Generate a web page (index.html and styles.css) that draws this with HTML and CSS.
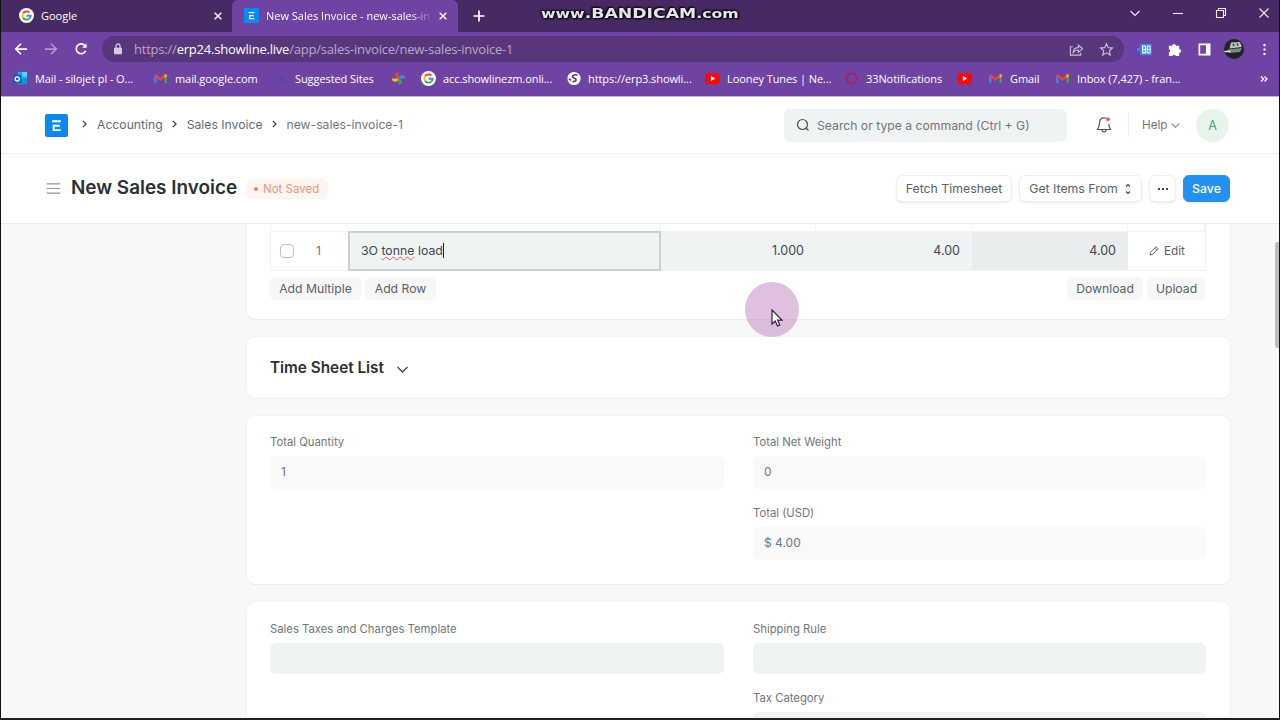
FILE: index.html
```
<!DOCTYPE html>
<html lang="en">
<head>
  <meta charset="UTF-8">
  <meta name="viewport" content="width=device-width, initial-scale=1.0">
  <title>New Sales Invoice - new-sales-invoice-1</title>
  <link rel="stylesheet" href="styles.css">
</head>
<body>
  <!-- shared icons -->
  <svg class="sprite">
    <symbol id="i-google" viewBox="0 0 16 16">
      <circle cx="8" cy="8" r="8" fill="#fff"/>
      <g fill="none" stroke-width="2">
        <path d="M4.300 5.700A4.400 4.400 0 0 1 11 4.800" stroke="#ea4335"/>
        <path d="M4.300 10.300a4.600 4.600 0 0 1 0-4.600" stroke="#fbbc05"/>
        <path d="M11.200 11a4.400 4.400 0 0 1-6.900-.7" stroke="#34a853"/>
        <path d="M8 8.200h4.400c0 1.300-.4 2.200-1.200 2.800" stroke="#4285f4"/>
      </g>
    </symbol>
    <symbol id="i-erp" viewBox="0 0 24 24">
      <rect width="24" height="24" rx="2" fill="#0b89f0"/>
      <path d="M7.500 7.500h9M8.500 12.200h7M8.500 16.800h8" stroke="#fff" stroke-width="2" fill="none"/>
      <path d="M9 11.200v6.500" stroke="#fff" stroke-width="2"/>
    </symbol>
    <symbol id="i-gmail" viewBox="0 0 16 16">
      <path d="M2.500 13V5" stroke="#4285f4" stroke-width="2.400"/>
      <path d="M13.500 13V5" stroke="#34a853" stroke-width="2.400"/>
      <path d="M2.200 4.200 8 9l5.800-4.800" stroke="#e8453c" stroke-width="2.600" fill="none"/>
      <path d="M12.300 3.500h2.400v2.700l-2.400 1.600z" fill="#fbbc04"/>
    </symbol>
    <symbol id="i-youtube" viewBox="0 0 16 16">
      <rect y="2" width="16" height="12" rx="3" fill="#f20d0d"/>
      <path d="M6.300 5.400 10.800 8l-4.500 2.600z" fill="#fff"/>
    </symbol>
    <symbol id="i-down" viewBox="0 0 12 12">
      <path d="m2 4 4 4 4-4" fill="none" stroke="currentColor" stroke-width="1.100"/>
    </symbol>
    <symbol id="i-right" viewBox="0 0 8 8">
      <path d="m2.300 1.500 2.500 2.500-2.500 2.500" fill="none" stroke="#41484f" stroke-width="1.100"/>
    </symbol>
  </svg>

  <div class="browser">
    <div class="tabs">
      <div class="tab">
        <svg class="favicon"><use href="#i-google"/></svg>
        <span class="tab-title">Google</span>
        <svg class="tab-close" viewBox="0 0 8 8"><path d="m.7.7 6.600 6.600M7.300.7.7 7.300"/></svg>
      </div>
      <div class="tab active">
        <svg class="favicon"><use href="#i-erp"/></svg>
        <span class="tab-title">New Sales Invoice - new-sales-in</span>
        <svg class="tab-close" viewBox="0 0 8 8"><path d="m.7.7 6.600 6.600M7.300.7.7 7.300"/></svg>
      </div>
      <svg class="tab-add" viewBox="0 0 12 12"><path d="M6 .5v11M.5 6h11"/></svg>
      <div class="window-buttons">
        <svg viewBox="0 0 12 12"><path d="m1.500 4 4.500 4.500L10.500 4"/></svg>
        <svg viewBox="0 0 12 12"><path d="M1 6.500h10"/></svg>
        <svg viewBox="0 0 12 12"><path d="M1.500 3.500h7v7h-7zM3.500 3.500v-2h7v7h-2"/></svg>
        <svg viewBox="0 0 12 12"><path d="m1.500 1.500 9 9M10.500 1.500l-9 9"/></svg>
      </div>
      <div class="watermark"><span class="wm-www">www</span>.BANDICAM<span class="wm-com">.com</span></div>
    </div>

    <div class="toolbar">
      <div class="nav-buttons">
        <svg viewBox="0 0 16 16"><path d="M15 8H2.500M8 2 2 8l6 6"/></svg>
        <svg class="off" viewBox="0 0 16 16"><path d="M1 8h12.500M8 2l6 6-6 6"/></svg>
        <svg viewBox="0 0 16 16"><path d="M13.300 10a5.600 5.600 0 1 1-1.200-6.200L14 5.700"/><path d="M14.300 1.500v5h-5z" fill="#fff" stroke="none"/></svg>
      </div>
      <div class="address">
        <svg class="lock" viewBox="0 0 10 12"><rect x="1" y="4.800" width="8" height="6.400" rx=".8" fill="#d5cbe0"/><path d="M3 5V3a2 2 0 0 1 4 0v2" fill="none" stroke="#d5cbe0" stroke-width="1.300"/></svg>
        <span class="url">https://<b>erp24.showline.live</b>/app/sales-invoice/new-sales-invoice-1</span>
        <svg class="share" viewBox="0 0 16 16"><path d="M4 5H1.500v9h11v-2.500M4.500 11c.3-3.500 2.500-5 5.500-5V3.300L14.500 7.300 10 11V8.500c-2.500 0-4.200.7-5.500 2.500z"/></svg>
        <svg class="star" viewBox="0 0 16 16"><path d="m8 1.800 1.900 4.200 4.500.4-3.400 3 1 4.500L8 11.500l-4 2.400 1-4.500-3.400-3 4.500-.4z"/></svg>
      </div>
      <div class="extensions">
        <svg viewBox="0 0 16 16"><rect x="3.500" y="2" width="12" height="12" fill="#3a8af5"/><path d="M0 8h3" stroke="#3a8af5" stroke-width="3"/><path d="M6 4.500h3M6 8h3M6 11.500h3M6 4v8M9 4v8M11 4.500h3M11 8h3M11 11.500h3M11 4v8M14 4v8" stroke="#eaf3ff" stroke-width="1.300" fill="none"/></svg>
        <svg viewBox="0 0 16 16"><path d="M2 4h3.500a2 2 0 1 1 4 0H13v3.500a2 2 0 1 1 0 4V15H9.300a1.900 1.900 0 0 0-3.600 0H2v-3.700a1.900 1.900 0 0 0 0-3.600z" fill="#fff"/></svg>
        <svg viewBox="0 0 16 16"><path d="M2.500 2.500h11v11h-11z" fill="none" stroke="#fff" stroke-width="1.800"/><path d="M9.500 2h4v12h-4z" fill="#fff"/></svg>
        <svg class="profile" viewBox="0 0 20 20"><circle cx="10" cy="10" r="10" fill="#1f2325"/><path d="m7 3.500 9-.5 2 5-12.500 1.500z" fill="#b5c2bd"/><path d="m3 10.500 15-1.500-2 4-11 1z" fill="#7c8984"/><path d="m9 5 1 2M13 4.500l1 2" stroke="#343a3a" stroke-width="1.500"/><path d="M.5 12.500h6" stroke="#e3e8e6" stroke-width="1.500"/></svg>
        <svg viewBox="0 0 16 16"><path d="M8 2.200v2.200M8 6.900v2.200M8 11.600v2.200" stroke="#fff" stroke-width="2.200"/></svg>
      </div>
    </div>

    <div class="bookmarks">
      <div class="bookmark">
        <svg viewBox="0 0 16 16"><path d="M5 1h10v13H5z" fill="#28a8ea"/><path d="M10 1h5v5h-5z" fill="#50d9ff"/><path d="m5 9 10-1v6H5z" fill="#1490df"/><rect y="4" width="9" height="9" rx="1" fill="#0a64ad"/><circle cx="4.500" cy="8.500" r="2.200" fill="none" stroke="#fff" stroke-width="1.400"/></svg>
        <span>Mail - silojet pl - O...</span>
      </div>
      <div class="bookmark"><svg><use href="#i-gmail"/></svg><span>mail.google.com</span></div>
      <div class="bookmark"><svg class="narrow" viewBox="0 0 16 16"><path d="M8 3.500 13 12H3z" fill="#4c48b4"/></svg><span>Suggested Sites</span></div>
      <div class="bookmark"><svg viewBox="0 0 16 16"><path d="M8 8V1a3.500 3.500 0 0 0 0 7z" fill="#ea4335"/><path d="M8 8h7a3.500 3.500 0 0 0-7 0z" fill="#4285f4"/><path d="M8 8v7a3.500 3.500 0 0 0 0-7z" fill="#34a853"/><path d="M8 8H1a3.500 3.500 0 0 0 7 0z" fill="#fbbc04"/></svg></div>
      <div class="bookmark"><svg><use href="#i-google"/></svg><span>acc.showlinezm.onli...</span></div>
      <div class="bookmark"><svg class="globe" viewBox="0 0 16 16"><circle cx="8" cy="8" r="7.500" fill="#fff"/><path d="M12 4.200C9.500 2.900 6 4.200 6.200 6c.4 1.800 4.500 1.500 4.200 3.500-.2 1.500-2.200 2.300-4 2M2 8.500l3 1.700" fill="none" stroke="#51347a" stroke-width="1.800"/></svg><span>https://erp3.showli...</span></div>
      <div class="bookmark"><svg><use href="#i-youtube"/></svg><span>Looney Tunes | Ne...</span></div>
      <div class="bookmark"><svg viewBox="0 0 16 16"><circle cx="8" cy="8" r="5.500" fill="none" stroke="#98286f" stroke-width="2.500"/></svg><span>33Notifications</span></div>
      <div class="bookmark"><svg><use href="#i-youtube"/></svg></div>
      <div class="bookmark"><svg><use href="#i-gmail"/></svg><span>Gmail</span></div>
      <div class="bookmark"><svg><use href="#i-gmail"/></svg><span>Inbox (7,427) - fran...</span></div>
      <svg class="more-bookmarks" viewBox="0 0 8 8"><path d="m1 1.500 2.500 2.500L1 6.500M4.500 1.500 7 4 4.500 6.500"/></svg>
    </div>
  </div>

  <div class="navbar">
    <svg class="app-logo"><use href="#i-erp"/></svg>
    <div class="breadcrumbs">
      <svg><use href="#i-right"/></svg><span>Accounting</span>
      <svg><use href="#i-right"/></svg><span>Sales Invoice</span>
      <svg><use href="#i-right"/></svg><span class="current">new-sales-invoice-1</span>
    </div>
    <div class="search">
      <svg viewBox="0 0 14 14"><circle cx="6.500" cy="6.500" r="5" fill="none" stroke="#4a5157" stroke-width="1.200"/><path d="m10 10 2.500 2.500" stroke="#4a5157" stroke-width="1.200"/></svg>
      <span>Search or type a command (Ctrl + G)</span>
    </div>
    <svg class="bell" viewBox="0 0 16 18"><path d="M10 2.300C6 .8 3.600 3.300 3.600 6.200c0 4-1 5.400-2.100 7.300h13c-1-1.600-1.600-3-1.700-5.500M5.800 13.800c.3 1.600 1.200 2.200 2.200 2.200s2-.6 2.200-2.200" fill="none" stroke="#4a5157" stroke-width="1.200"/><circle cx="12" cy="3.200" r="2" fill="#e6695f"/></svg>
    <div class="help">Help <svg><use href="#i-down"/></svg></div>
    <div class="avatar">A</div>
  </div>

  <div class="page-head">
    <svg class="menu" viewBox="0 0 16 12"><path d="M.5 1h15M.5 6h15M.5 11h15"/></svg>
    <h1>New Sales Invoice</h1>
    <span class="indicator">Not Saved</span>
    <div class="actions">
      <button class="btn fetch">Fetch Timesheet</button>
      <button class="btn get-items">Get Items From
        <svg viewBox="0 0 8 14"><path d="M2 4.500 4 2.500l2 2M2 9.500l2 2 2-2"/></svg>
      </button>
      <button class="btn dots"><i></i><i></i><i></i></button>
      <button class="btn save">Save</button>
    </div>
  </div>

  <div class="page-body">
    <div class="card items-card">
      <div class="grid-head"><i></i><i></i><i></i><i></i><i></i><i></i></div>
      <div class="grid-row">
        <div class="cell row-index"><span class="checkbox"></span><span>1</span></div>
        <div class="cell item">3O&nbsp;<span class="misspelled">tonne</span>&nbsp;load<span class="caret"></span></div>
        <div class="cell number">1.000</div>
        <div class="cell number">4.00</div>
        <div class="cell number amount">4.00</div>
        <div class="cell edit">
          <svg viewBox="0 0 10 10"><path d="M1 9l.6-2.800L6.800 1c.5-.5 2.700 1.500 2.100 2.200L3.700 8.400zM5.800 2.200l2 2"/></svg>
          Edit
        </div>
      </div>
      <div class="grid-footer">
        <button class="small-btn add-multiple">Add Multiple</button>
        <button class="small-btn add-row">Add Row</button>
        <button class="small-btn download">Download</button>
        <button class="small-btn upload">Upload</button>
      </div>
    </div>

    <div class="card section-card">
      <h2>Time Sheet List</h2>
      <svg><use href="#i-down"/></svg>
    </div>

    <div class="card totals-card">
      <div class="column">
        <label>Total Quantity</label>
        <div class="control read-only">1</div>
      </div>
      <div class="column">
        <label>Total Net Weight</label>
        <div class="control read-only">0</div>
        <label>Total (USD)</label>
        <div class="control read-only">$ 4.00</div>
      </div>
    </div>

    <div class="card taxes-card">
      <div class="column">
        <label>Sales Taxes and Charges Template</label>
        <div class="control"></div>
      </div>
      <div class="column">
        <label>Shipping Rule</label>
        <div class="control"></div>
        <label>Tax Category</label>
        <div class="control"></div>
      </div>
    </div>
    <div class="scrollbar"></div>
  </div>

  <div class="click-halo"></div>
  <svg class="cursor" viewBox="0 0 12 18"><path d="M1 1v14l3.200-3 2.300 5 2.300-1-2.200-4.800H11z" fill="#fff" stroke="#32203c" stroke-width="1.200"/></svg>
</body>
</html>
```
FILE: styles.css
```
:root {
  --frame: #472a64;
  --toolbar: #6f43a3;
  --pill: #57367c;
  --text: #40474c;
  --muted: #70767a;
  --control: #f0f3f4;
}
* {
  box-sizing: border-box;
}
body {
  margin: 0;
  width: 1280px;
  height: 720px;
  overflow: hidden;
  position: relative;
  display: flex;
  flex-direction: column;
  border-left: 1px solid #111;
  border-right: 1px solid #111;
  border-bottom: 2px solid #231f20;
  background: #fff;
  color: var(--text);
  font-family: Inter, "Liberation Sans", sans-serif;
  font-size: 12.5px;
}
.sprite {
  display: none;
}
svg {
  flex: none;
}

/* browser window */
.browser {
  flex: none;
  height: 97px;
  background: var(--toolbar);
  border-bottom: 1px solid #c9b3dd;
  color: #fff;
  font-family: "Open Sans", "Noto Sans", sans-serif;
  font-size: 11px;
}
.tabs {
  position: relative;
  display: flex;
  align-items: center;
  height: 32px;
  background: var(--frame);
}
.tab {
  display: flex;
  align-items: center;
  width: 231px;
  height: 32px;
  padding: 0 10px 1px 18px;
}
.tab.active {
  width: 226px;
  padding: 0 11px 1px 12px;
  background: var(--toolbar);
  border-radius: 6px 6px 0 0;
}
.favicon {
  width: 15px;
  height: 15px;
  margin-right: 7px;
}
.tab-title {
  flex: 1;
  overflow: hidden;
  white-space: nowrap;
}
.active .tab-title {
  margin-right: 6px;
  -webkit-mask-image: linear-gradient(90deg, #000 86%, transparent);
  mask-image: linear-gradient(90deg, #000 86%, transparent);
}
.tab-close {
  width: 8px;
  height: 8px;
  stroke: #fff;
  stroke-width: 1.5;
}
.tab-add {
  width: 12px;
  height: 12px;
  margin-left: 15px;
  stroke: #fff;
  stroke-width: 1.7;
}
.window-buttons {
  display: flex;
  gap: 31px;
  margin: -6px 9px 0 auto;
}
.window-buttons svg {
  width: 12px;
  height: 12px;
  fill: none;
  stroke: #eee;
  stroke-width: 1.1;
}
.watermark {
  position: absolute;
  left: 540px;
  top: 3px;
  color: #e6e3ea;
  font: bold 13.5px/20px "DejaVu Sans", sans-serif;
  white-space: nowrap;
  text-shadow: 0 0 2px #000, 1px 1px 2px #000, -1px -1px 2px #000;
  transform: scaleX(1.28);
  transform-origin: left;
}
.wm-www,
.wm-com {
  font-size: 12.3px;
}
.toolbar {
  display: flex;
  align-items: center;
  height: 30px;
  padding-top: 4px;
}
.nav-buttons {
  display: flex;
  gap: 16px;
  width: 101px;
  padding-left: 13px;
}
.nav-buttons svg {
  width: 14px;
  height: 14px;
  fill: none;
  stroke: #fff;
  stroke-width: 2;
}
.nav-buttons .off {
  opacity: .45;
}
.address {
  display: flex;
  align-items: center;
  width: 1022px;
  height: 26px;
  padding: 0 10px 0 11px;
  border-radius: 13px;
  background: var(--pill);
}
.lock {
  width: 10px;
  height: 12px;
  margin-right: 11px;
}
.url {
  flex: 1;
  margin-top: -1px;
  color: #b9a8cd;
  font-size: 13px;
  letter-spacing: -0.21px;
}
.url b {
  color: #fff;
  font-weight: 400;
}
.share,
.star {
  width: 15px;
  height: 15px;
  margin-left: 15px;
  fill: none;
  stroke: #cbbdd9;
  stroke-width: 1.2;
}
.extensions {
  display: flex;
  align-items: center;
  gap: 15px;
  padding-left: 13px;
}
.extensions svg {
  width: 15px;
  height: 15px;
}
.extensions .profile {
  width: 20px;
  height: 20px;
  margin: 0 -2px 0 -3px;
}
.bookmarks {
  display: grid;
  grid-template-columns: 140px 122px 116px 30px 146px 138px 139px 113px 31px 67px 205px 10px;
  align-items: center;
  height: 33px;
  padding-left: 12px;
}
.bookmark {
  display: flex;
  align-items: center;
  gap: 7px;
  white-space: nowrap;
  letter-spacing: -0.08px;
}
.bookmark svg {
  width: 15px;
  height: 15px;
}
.bookmark .narrow {
  width: 13px;
}
.bookmark .globe {
  width: 14px;
}
.more-bookmarks {
  width: 8px;
  height: 8px;
  fill: none;
  stroke: #fff;
  stroke-width: 1.3;
}

/* app navbar */
.navbar {
  flex: none;
  display: flex;
  align-items: center;
  height: 57px;
  padding-left: 44px;
  border-bottom: 1px solid #ededee;
  color: var(--muted);
}
.app-logo {
  width: 23px;
  height: 23px;
}
.breadcrumbs {
  display: flex;
  align-items: center;
  width: 716px;
  margin-top: -2px;
  padding-left: 12px;
  color: #636b71;
  font-size: 12.2px;
}
.breadcrumbs svg {
  width: 10px;
  height: 10px;
  margin-right: 7px;
}
.breadcrumbs span {
  margin-right: 7px;
}
.breadcrumbs .current {
  color: var(--muted);
}
.search {
  display: flex;
  align-items: center;
  gap: 7px;
  width: 283px;
  height: 33px;
  padding-left: 12px;
  border-radius: 6px;
  background: var(--control);
  font-size: 12.2px;
}
.search svg {
  width: 14px;
  height: 14px;
}
.bell {
  width: 16px;
  height: 18px;
  margin: 0 16px 0 29px;
}
.help {
  display: flex;
  align-items: center;
  gap: 2px;
  width: 68px;
  height: 24px;
  padding-left: 13px;
  border-left: 1px solid #ececee;
  font-size: 11.7px;
}
.help svg {
  width: 11px;
  height: 11px;
}
.avatar {
  width: 33px;
  height: 33px;
  border-radius: 50%;
  background: #e8f3eb;
  color: #46a36f;
  line-height: 33px;
  text-align: center;
}

/* page head */
.page-head {
  flex: none;
  display: flex;
  align-items: center;
  height: 70px;
  padding: 0 49px 0 45px;
  border-bottom: 1px solid #e9eaeb;
}
.menu {
  width: 15px;
  height: 11px;
  stroke: #90979d;
  stroke-width: 1.3;
}
h1 {
  margin: -3px 9px 0 10px;
  color: #2a3035;
  font-size: 18.9px;
  font-weight: 600;
}
.indicator {
  display: flex;
  align-items: center;
  gap: 5px;
  height: 20px;
  padding: 0 9px 0 8px;
  border-radius: 6px;
  background: #fff5f0;
  color: #e69580;
  font-size: 11.5px;
}
.indicator::before {
  content: "";
  width: 4px;
  height: 4px;
  border-radius: 50%;
  background: #e2866c;
}
.actions {
  display: flex;
  gap: 7px;
  margin-left: auto;
}
.btn {
  display: flex;
  align-items: center;
  justify-content: center;
  height: 27px;
  padding: 0;
  border: 1px solid #eceeef;
  border-radius: 6px;
  background: #fff;
  box-shadow: 0 1px 2px rgba(0, 0, 0, 0.08);
  color: #596167;
  font: 12.3px Inter, sans-serif;
}
.fetch {
  width: 116px;
}
.get-items {
  width: 123px;
  gap: 6px;
}
.get-items svg {
  width: 8px;
  height: 14px;
  fill: none;
  stroke: #444;
  stroke-width: 1.2;
}
.dots {
  width: 27px;
  gap: 2px;
}
.dots i {
  width: 2px;
  height: 2px;
  background: #40474c;
}
.save {
  width: 47px;
  border-color: #2490ef;
  background: #2490ef;
  color: #fff;
  font-weight: 500;
}

/* form */
.page-body {
  position: relative;
  flex: 1;
  display: flex;
  flex-direction: column;
  gap: 18px;
  min-height: 0;
  padding: 0 48px 0 246px;
  overflow: hidden;
  background: #f8f8f8;
}
.card {
  flex: none;
  width: 983px;
  padding: 0 24px 0 23px;
  border-radius: 8px;
  background: #fff;
  box-shadow: 0 0 2px rgba(0, 0, 0, 0.08), 0 1px 1px rgba(0, 0, 0, 0.03);
}
.items-card {
  height: 95px;
  border-radius: 0 0 8px 8px;
}
.grid-head,
.grid-row {
  display: grid;
  grid-template-columns: 77px 313px 155px 156px 156px 77px;
  width: 936px;
}
.grid-head {
  height: 8px;
  border: 1px solid #f0f2f3;
  border-width: 0 1px 1px;
}
.grid-head i {
  border-right: 1px solid #f3f4f5;
}
.grid-row {
  height: 39px;
  border: 1px solid #eff1f2;
  border-top: 0;
}
.cell {
  display: flex;
  align-items: center;
  padding-bottom: 1px;
  background: var(--control);
}
.row-index {
  gap: 22px;
  padding-left: 9px;
  background: #fff;
  color: var(--muted);
  font-size: 12px;
}
.checkbox {
  width: 14px;
  height: 14px;
  border: 1px solid #b9c0c5;
  border-radius: 4px;
}
.item {
  margin: -1px 0;
  padding-left: 11px;
  border: 2px solid #cbd0d2;
  font-size: 12.3px;
}
.misspelled {
  text-decoration: underline wavy #e05a5a 1px;
  text-underline-offset: 1px;
  text-decoration-skip-ink: none;
}
.caret {
  width: 1px;
  height: 15px;
  background: #222;
}
.number {
  justify-content: flex-end;
  padding-right: 12px;
}
.amount {
  background: #e9edee;
}
.edit {
  gap: 5px;
  padding-left: 21px;
  background: #fff;
  color: #596167;
  font-size: 11.7px;
}
.edit svg {
  width: 10px;
  height: 10px;
  fill: none;
  stroke: #596167;
}
.grid-footer {
  display: flex;
  gap: 4px;
  width: 936px;
  margin-top: 6px;
}
.small-btn {
  height: 23px;
  padding: 0;
  border: 0;
  border-radius: 5px;
  background: #f7f7f8;
  color: #596167;
  font: 12.2px Inter, sans-serif;
}
.add-multiple {
  width: 91px;
}
.add-row {
  width: 71px;
}
.download {
  width: 76px;
  margin-left: auto;
}
.upload {
  width: 59px;
}
.section-card {
  display: flex;
  align-items: center;
  gap: 11px;
  height: 61px;
}
.section-card svg {
  width: 15px;
  height: 15px;
  margin-top: 3px;
}
h2 {
  margin: 0;
  color: #2a3035;
  font-size: 15.3px;
  font-weight: 600;
}
.totals-card,
.taxes-card {
  display: grid;
  grid-template-columns: 454px 453px;
  column-gap: 29px;
}
.totals-card {
  height: 168px;
  padding-top: 18px;
}
.taxes-card {
  height: 150px;
  padding-top: 19px;
}
label {
  display: block;
  height: 22px;
  color: var(--muted);
  font-size: 11.3px;
  line-height: 17px;
}
.control {
  height: 31px;
  margin-bottom: 16px;
  padding-left: 11px;
  border-radius: 6px;
  background: var(--control);
  color: var(--muted);
  font-size: 12px;
  line-height: 32px;
}
.read-only {
  height: 33px;
  background: #f9f9f9;
}
.scrollbar {
  position: absolute;
  right: 0;
  top: 18px;
  width: 4px;
  height: 106px;
  border-radius: 3px 0 0 3px;
  background: #b8bec2;
}

/* pointer */
.click-halo {
  position: absolute;
  left: 744px;
  top: 282px;
  width: 54px;
  height: 55px;
  border-radius: 50%;
  background: rgba(196, 139, 196, 0.54);
}
.cursor {
  position: absolute;
  left: 770px;
  top: 309px;
  width: 12px;
  height: 18px;
}
```
